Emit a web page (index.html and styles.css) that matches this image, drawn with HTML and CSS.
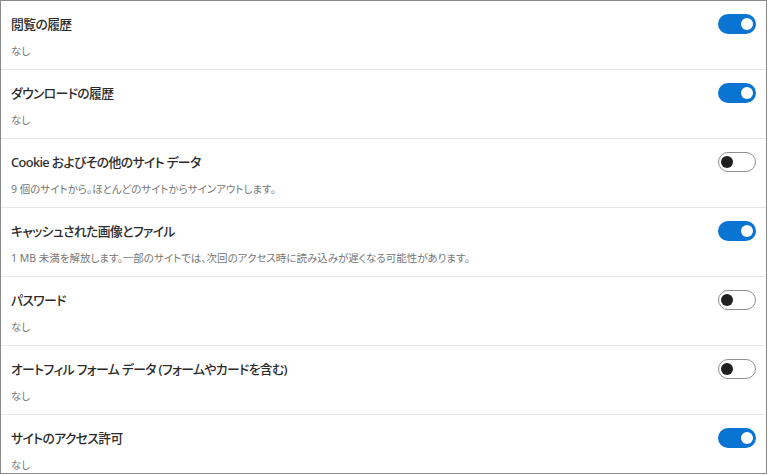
FILE: index.html
```html
<!DOCTYPE html>
<html lang="ja">
<head>
<meta charset="utf-8">
<link rel="stylesheet" href="styles.css">
</head>
<body>
<div class="panel">
  <div class="row">
    <div class="text"><div class="title">閲覧の履歴</div><div class="sub">なし</div></div>
    <div class="toggle on"><span class="knob"></span></div>
  </div>
  <div class="row">
    <div class="text"><div class="title">ダウンロードの履歴</div><div class="sub">なし</div></div>
    <div class="toggle on"><span class="knob"></span></div>
  </div>
  <div class="row">
    <div class="text"><div class="title">Cookie およびその他のサイト データ</div><div class="sub">9 個のサイトから。ほとんどのサイトからサインアウトします。</div></div>
    <div class="toggle off"><span class="knob"></span></div>
  </div>
  <div class="row">
    <div class="text"><div class="title">キャッシュされた画像とファイル</div><div class="sub">1 MB 未満を解放します。一部のサイトでは、次回のアクセス時に読み込みが遅くなる可能性があります。</div></div>
    <div class="toggle on"><span class="knob"></span></div>
  </div>
  <div class="row">
    <div class="text"><div class="title">パスワード</div><div class="sub">なし</div></div>
    <div class="toggle off"><span class="knob"></span></div>
  </div>
  <div class="row">
    <div class="text"><div class="title">オートフィル フォーム データ (フォームやカードを含む)</div><div class="sub">なし</div></div>
    <div class="toggle off"><span class="knob"></span></div>
  </div>
  <div class="row">
    <div class="text"><div class="title">サイトのアクセス許可</div><div class="sub">なし</div></div>
    <div class="toggle on"><span class="knob"></span></div>
  </div>
</div>
</body>
</html>
```

FILE: styles.css
```css
html, body {
  margin: 0;
  padding: 0;
  background: #ffffff;
}

.panel {
  width: 767px;
  height: 474px;
  box-sizing: border-box;
  border: 1px solid #8a8a8a;
  overflow: hidden;
  background: #ffffff;
  font-family: "Noto Sans", "Noto Sans CJK JP", sans-serif;
  font-feature-settings: "palt";
}

.row {
  display: flex;
  align-items: flex-start;
  justify-content: space-between;
  height: 69px;
  box-sizing: border-box;
  padding: 13px 10px 0 10px;
  border-bottom: 1px solid #e6e6e6;
  flex-shrink: 0;
}

.text {
  display: flex;
  flex-direction: column;
}

.title {
  font-size: 12.8px;
  line-height: 20px;
  font-weight: 500;
  letter-spacing: -0.6px;
  color: #2b2b2b;
}

.sub {
  margin-top: 9px;
  font-size: 10.5px;
  line-height: 16px;
  color: #777777;
}

.toggle {
  width: 38px;
  height: 20px;
  box-sizing: border-box;
  border-radius: 10px;
  display: flex;
  align-items: center;
  padding: 0 3px;
  flex-shrink: 0;
}

.toggle .knob {
  width: 12px;
  height: 12px;
  border-radius: 50%;
}

.toggle.on {
  background: #0a74d2;
  justify-content: flex-end;
}

.toggle.on .knob {
  background: #ffffff;
}

.toggle.off {
  background: #ffffff;
  border: 1px solid #8f8f8f;
  padding: 0 2px;
  justify-content: flex-start;
}

.toggle.off .knob {
  background: #1f1f1f;
}
```
